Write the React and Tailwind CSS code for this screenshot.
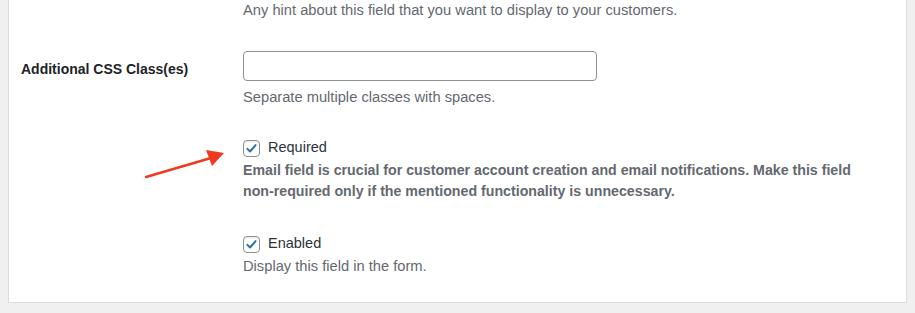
import React from "react";

const font = { fontFamily: '"Liberation Sans", Arial, sans-serif' };

function Check({ label }) {
  return (
    <label className="flex items-center h-[20px] gap-[8px] text-[14.5px] text-[#2c3338]">
      <span className="w-[17px] h-[17px] rounded-[4px] border border-[#8c8f94] bg-white flex items-center justify-center shadow-[inset_0_1px_2px_rgba(0,0,0,0.1)]">
        <svg viewBox="0 0 20 20" className="w-[15px] h-[15px]">
          <path d="M4.5 10.5l3.5 3.5 7.5-8.5" fill="none" stroke="#2271b1" strokeWidth="2.6" strokeLinecap="round" strokeLinejoin="round" />
        </svg>
      </span>
      {label}
    </label>
  );
}

export default function App() {
  return (
    <div className="w-[915px] h-[313px] bg-[#f0f0f1] overflow-hidden" style={font}>
      <div className="mx-[8px] w-[899px] bg-white border-x border-b border-[#dcdcde] pb-[26px]">
        <div className="flex">
          <div className="w-[234px] shrink-0" />
          <p className="text-[14.7px] leading-[20px] text-[#646970]">
            Any hint about this field that you want to display to your customers.
          </p>
        </div>

        <div className="flex mt-[31px]">
          <div className="w-[234px] shrink-0 pl-[12px] pt-[8px] text-[14px] leading-[20px] font-bold text-[#1d2327]">
            Additional CSS Class(es)
          </div>
          <div>
            <input type="text" className="block w-[354px] h-[30px] rounded-[4px] border border-[#8c8f94] bg-white" />
            <p className="mt-[6px] text-[14.7px] leading-[20px] text-[#646970]">
              Separate multiple classes with spaces.
            </p>
          </div>
        </div>

        <div className="flex mt-[31px]">
          <div className="w-[234px] shrink-0 pl-[136px] pt-[11px]">
            <svg width="80" height="30" viewBox="0 0 80 30">
              <line x1="1" y1="28" x2="66" y2="9" stroke="#f03a20" strokeWidth="2.5" strokeLinecap="round" />
              <polygon points="79,4 61,1 67,17" fill="#f03a20" />
            </svg>
          </div>
          <div>
            <Check label="Required" />
            <p className="mt-[2px] text-[14.2px] leading-[21px] font-bold text-[#646970] w-[640px]">
              Email field is crucial for customer account creation and email notifications. Make this field non-required only if the mentioned functionality is unnecessary.
            </p>
            <div className="mt-[32px]">
              <Check label="Enabled" />
            </div>
            <p className="mt-[2px] text-[14.7px] leading-[20px] text-[#646970]">
              Display this field in the form.
            </p>
          </div>
        </div>
      </div>
    </div>
  );
}
